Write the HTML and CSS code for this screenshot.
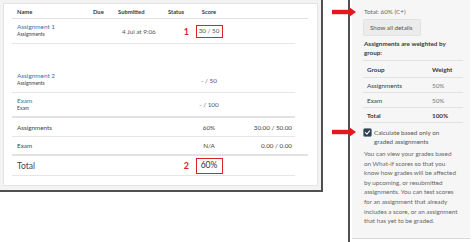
FILE: index.html
```html
<!DOCTYPE html>
<html>
<head>
<meta charset="utf-8">
<link rel="stylesheet" href="styles.css">
</head>
<body>
<div class="page">
  <div class="left">
    <div class="card">
      <div class="row head wide">
        <div>Name</div><div>Due</div><div>Submitted</div><div>Status</div><div class="c">Score</div><div></div>
      </div>
      <div class="row item">
        <div class="name"><a class="link">Assignment 1</a><span class="sub">Assignments</span></div>
        <div></div>
        <div class="date">4 Jul at 9:06</div>
        <div class="mark">1</div>
        <div class="c"><span class="box">30 / 50</span></div>
        <div></div>
      </div>
      <div class="spacer"></div>
      <div class="row item">
        <div class="name"><a class="link">Assignment 2</a><span class="sub">Assignments</span></div>
        <div></div><div></div><div></div>
        <div class="c">- / 50</div>
        <div></div>
      </div>
      <div class="row item thick">
        <div class="name"><a class="link">Exam</a><span class="sub">Exam</span></div>
        <div></div><div></div><div></div>
        <div class="c">- / 100</div>
        <div></div>
      </div>
      <div class="row group">
        <div>Assignments</div><div></div><div></div><div></div>
        <div class="c">60%</div>
        <div class="r">30.00 / 50.00</div>
      </div>
      <div class="row group thick wide">
        <div>Exam</div><div></div><div></div><div></div>
        <div class="c">N/A</div>
        <div class="r">0.00 / 0.00</div>
      </div>
      <div class="row total">
        <div>Total</div><div></div><div></div>
        <div class="mark">2</div>
        <div class="c"><span class="box big">60%</span></div>
        <div></div>
      </div>
    </div>
  </div>
  <div class="gap"></div>
  <div class="right">
    <div class="sidebar">
      <div class="grade">Total: 60% (C+)</div>
      <div class="btn">Show all details</div>
      <div class="weighted">Assignments are weighted by<br>group:</div>
      <div class="wtable">
        <div class="wrow whead"><span>Group</span><span>Weight</span></div>
        <div class="wrow"><span class="strong">Assignments</span><span class="muted">50%</span></div>
        <div class="wrow"><span class="strong">Exam</span><span class="muted">50%</span></div>
        <div class="wrow whead"><span>Total</span><span>100%</span></div>
      </div>
      <div class="check">
        <span class="cb"><svg viewBox="0 0 10 10" width="7" height="7"><path d="M2 5.2 L4.2 7.3 L8 2.8" fill="none" stroke="#fff" stroke-width="1.6" stroke-linecap="round" stroke-linejoin="round"/></svg></span>
        <span class="cblabel">Calculate based only on<br>graded assignments</span>
      </div>
      <p class="info">You can view your grades based<br>on What-if scores so that you<br>know how grades will be affected<br>by upcoming, or resubmitted<br>assignments. You can test scores<br>for an assignment that already<br>includes a score, or an assignment<br>that has yet to be graded.</p>
    </div>
  </div>
</div>
<svg class="arrow a1" viewBox="0 0 24 10" width="24" height="10"><rect x="0" y="2.8" width="18" height="4.4" fill="#e5161d"/><polygon points="17,0 24,5 17,10" fill="#e5161d"/></svg>
<svg class="arrow a2" viewBox="0 0 24 10" width="24" height="10"><rect x="0" y="2.8" width="18" height="4.4" fill="#e5161d"/><polygon points="17,0 24,5 17,10" fill="#e5161d"/></svg>
</body>
</html>
```
FILE: styles.css
```css
* { box-sizing: border-box; }
html, body { margin: 0; padding: 0; }
body {
  width: 474px;
  height: 242px;
  overflow: hidden;
  background: #fff;
  font-family: Lato, "Open Sans", sans-serif;
  color: #333;
  position: relative;
}
.page {
  display: flex;
  align-items: flex-start;
  height: 242px;
}
.left {
  width: 323px;
  height: 192px;
  background: #f3f3f3;
  border-right: 2px solid #505050;
  border-bottom: 2px solid #505050;
  padding: 3px 3px 0 3px;
}
.card {
  background: #fff;
  border: 1px solid #e4e4e4;
  height: 183px;
  padding: 0 0 0 8px;
}
.row {
  width: 283px;
  display: grid;
  grid-template-columns: 76px 25px 50px 27px 28px 1fr;
  padding: 0 3px 0 5px;
  align-items: center;
  border-bottom: 1px solid #e6e6e6;
  font-size: 6.3px;
}
.row.wide { width: 296px; padding-right: 16px; }
.row.thick { border-bottom: 2px solid #e2e2e2; }
.head {
  height: 15px;
  font-weight: 700;
  font-size: 5.8px;
  color: #3a3a3a;
  border-bottom-color: #e0e0e0;
}
.item { height: 25px; color: #555; }
.item.thick { height: 25px; }
.name { display: flex; flex-direction: column; align-self: start; padding-top: 4px; }
.link { color: #3b73a6; font-size: 6.4px; line-height: 8px; }
.sub { font-size: 5px; line-height: 6px; color: #444; }
.date { padding-left: 4px; color: #555; }
.c { text-align: center; }
.r { text-align: right; }
.mark {
  color: #d9232d;
  font-weight: 700;
  font-size: 9px;
  text-align: right;
  padding-right: 6px;
}
.box {
  display: inline-block;
  width: 27px;
  height: 13px;
  line-height: 10px;
  border: 1.5px solid #d9232d;
  color: #555;
}
.box.big {
  height: 16px;
  line-height: 13px;
  font-size: 8.5px;
  color: #333;
}
.spacer { height: 24px; }
.group { height: 19px; color: #444; }
.group.thick { height: 19px; }
.total { height: 20px; font-size: 8.5px; color: #444; }
.gap { width: 25px; height: 242px; }
.right {
  width: 126px;
  height: 242px;
  border-left: 2px solid #505050;
  padding-left: 2px;
}
.sidebar {
  width: 118px;
  height: 239px;
  background: #f6f6f6;
  border-bottom: 1px solid #d8d8d8;
  padding: 8px 6px 0 12px;
  font-size: 6.3px;
  color: #666;
}
.grade { line-height: 8px; }
.btn {
  margin-top: 3px;
  width: 58px;
  height: 17px;
  margin-left: -1px;
  background: #ececec;
  border: 1px solid #e2e2e2;
  border-radius: 2px;
  color: #555;
  line-height: 15px;
  padding-left: 6px;
  white-space: nowrap;
}
.weighted {
  margin-top: 3px;
  line-height: 9px;
  font-weight: 700;
  color: #3a3a3a;
  white-space: nowrap;
}
.wtable {
  margin-top: 3px;
  width: 100px;
  margin-left: -1px;
  border-top: 1px solid #e2e2e2;
}
.wrow {
  display: grid;
  grid-template-columns: 65px 1fr;
  height: 15px;
  align-items: center;
  padding-left: 4px;
  border-bottom: 1px solid #e2e2e2;
  color: #444;
}
.wrow.whead { font-weight: 700; color: #3a3a3a; }
.wtable .wrow:first-child { height: 17px; }
.strong { color: #3a3a3a; }
.muted { color: #777; }
.check {
  margin-top: 5px;
  display: flex;
  align-items: flex-start;
  gap: 2px;
  margin-left: -1px;
}
.cb {
  width: 9px;
  height: 9px;
  border-radius: 2px;
  background: #2f3f4e;
  border: 1px solid #7d8c99;
  display: flex;
  align-items: center;
  justify-content: center;
  margin-top: 0;
}
.cblabel { line-height: 9px; white-space: nowrap; color: #555; }
.info {
  margin: 3px 0 0 0;
  line-height: 9.6px;
  white-space: nowrap;
  color: #666;
}
.arrow { position: absolute; left: 332px; }
.a1 { top: 7px; }
.a2 { top: 127px; }
```
